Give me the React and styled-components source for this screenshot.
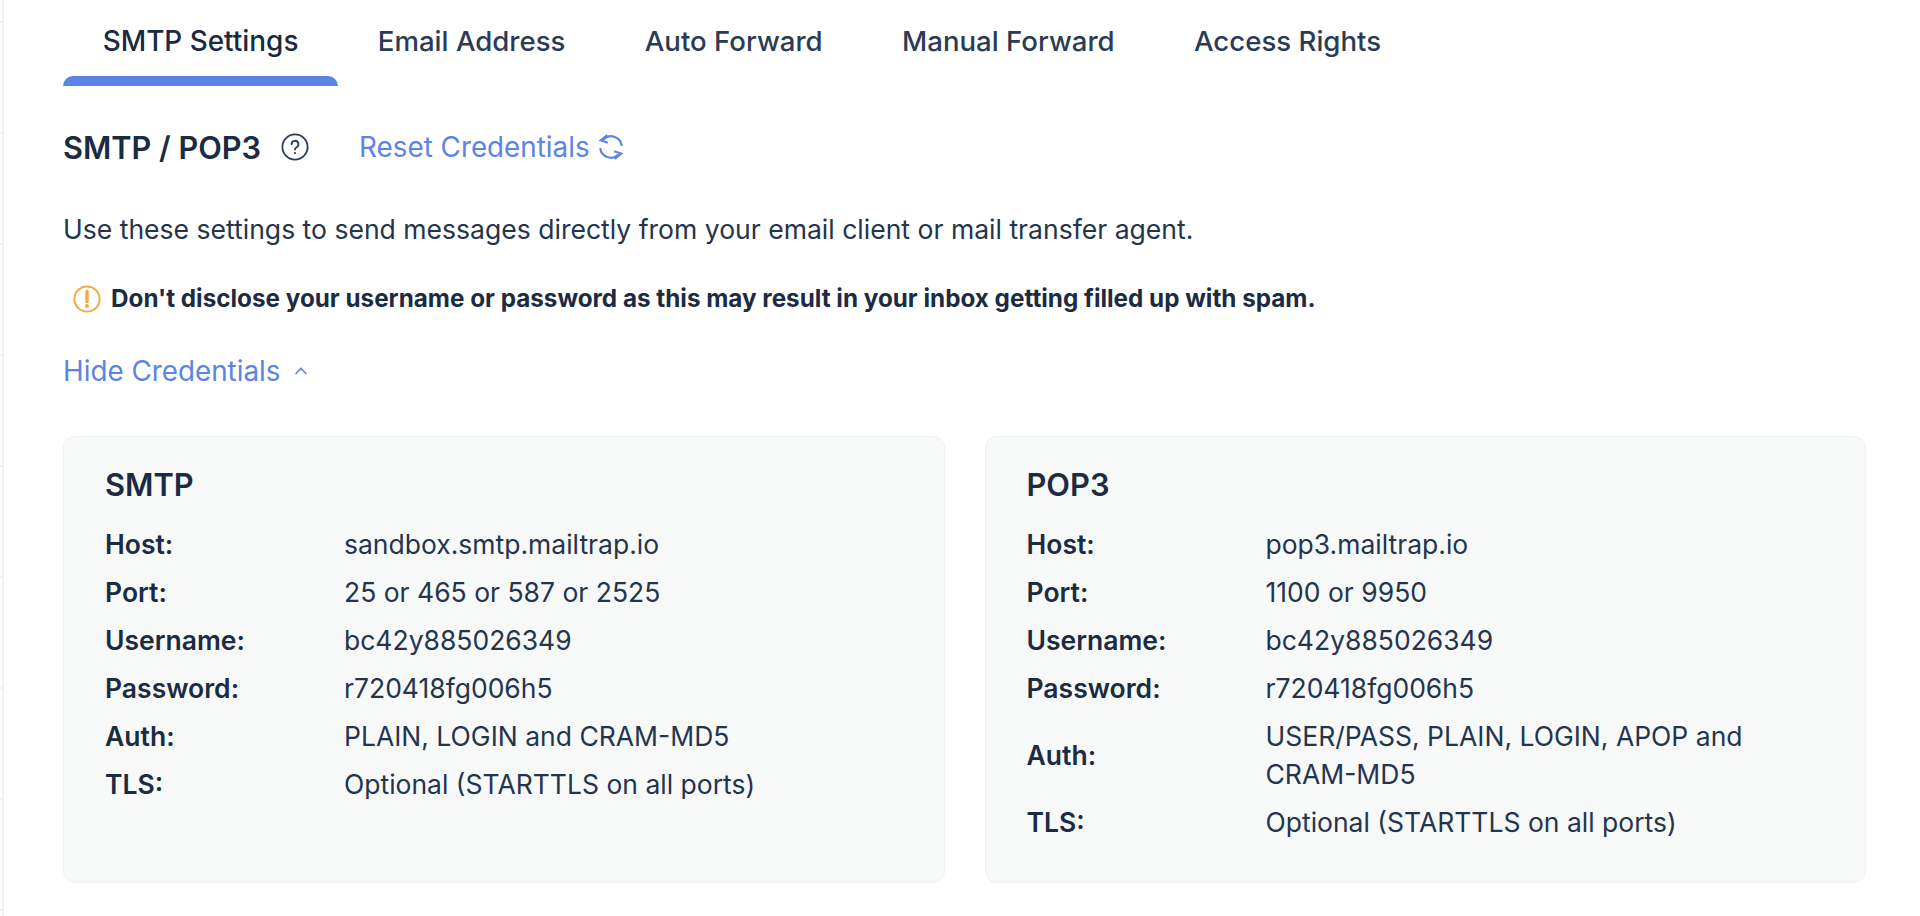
import React from "react";
import styled, { createGlobalStyle } from "styled-components";

const Global = createGlobalStyle`
  html, body { margin: 0; padding: 0; background: #fff; }
  body { font-family: Inter, "Liberation Sans", sans-serif; color: #1f2f47; }
  * { box-sizing: border-box; }
`;

const Page = styled.div`
  width: 1920px;
  height: 916px;
  overflow: hidden;
  display: flex;
`;

const SidebarEdge = styled.div`
  flex: none;
  width: 4px;
  height: 100%;
  border-right: 2px solid #f1f2f3;
  background: repeating-linear-gradient(
    to bottom,
    transparent 0,
    transparent 21px,
    #f1f2f3 21px,
    #f1f2f3 23px,
    transparent 23px,
    transparent 111px
  );
  background-size: 100% 111px;
`;

const Content = styled.main`
  flex: 1;
  min-width: 0;
  padding: 0 54px 0 59px;
`;

const Tabs = styled.nav`
  display: flex;
  height: 86px;
`;

const Tab = styled.div`
  position: relative;
  padding: 0 39.7px 4px;
  height: 86px;
  display: flex;
  align-items: center;
  font-size: ${(p) => (p.$active ? "27.9px" : "27.6px")};
  font-weight: 500;
  white-space: nowrap;
  color: ${(p) => (p.$active ? "#1a2a42" : "#2b3b55")};
  &::after {
    content: ${(p) => (p.$active ? '""' : "none")};
    position: absolute;
    left: 0;
    right: 0;
    bottom: 0;
    height: 10px;
    background: #5b84e6;
    border-radius: 10px 10px 0 0;
  }
`;

const TitleRow = styled.div`
  display: flex;
  align-items: center;
  margin-top: 37px;
  height: 48px;
`;

const Title = styled.h2`
  margin: 0;
  font-size: 30.7px;
  font-weight: 600;
  color: #1c2b42;
`;

const Help = styled.svg`
  width: 28px;
  height: 28px;
  margin-left: 20px;
  flex: none;
`;

const ResetLink = styled.a`
  display: flex;
  align-items: center;
  gap: 7px;
  margin-left: 50px;
  font-size: 27.8px;
  color: #5b84e6;
`;

const Lead = styled.p`
  margin: 40px 0 0;
  font-size: 26.55px;
  line-height: 36px;
  color: #24344d;
`;

const Warning = styled.div`
  display: flex;
  align-items: center;
  gap: 10px;
  margin-top: 34px;
  padding-left: 10px;
  font-size: 24.25px;
  line-height: 36px;
  font-weight: 700;
  color: #1c2b42;
`;

const ToggleLink = styled.a`
  display: flex;
  align-items: center;
  gap: 14px;
  margin-top: 36px;
  font-size: 27.8px;
  line-height: 36px;
  color: #5b84e6;
`;

const Cards = styled.div`
  display: grid;
  grid-template-columns: 1fr 1fr;
  gap: 40px;
  margin-top: 47px;
`;

const Card = styled.section`
  height: 447px;
  padding: 28px 41px;
  background: #f7f9f9;
  border: 1px solid #eff1f2;
  border-radius: 12px;
`;

const CardTitle = styled.h3`
  margin: 0 0 15px;
  font-size: 30.8px;
  line-height: 40px;
  font-weight: 600;
  color: #1c2b42;
`;

const Row = styled.div`
  display: grid;
  grid-template-columns: 239px 1fr;
  align-items: center;
  padding: 5px 0;
  font-size: 26.5px;
  line-height: 38px;
  color: #24344d;
`;

const Label = styled.span`
  font-weight: 600;
  color: #1c2b42;
`;

const Value = styled.span``;

const smtp = [
  ["Host:", "sandbox.smtp.mailtrap.io"],
  ["Port:", "25 or 465 or 587 or 2525"],
  ["Username:", "bc42y885026349"],
  ["Password:", "r720418fg006h5"],
  ["Auth:", "PLAIN, LOGIN and CRAM-MD5"],
  ["TLS:", "Optional (STARTTLS on all ports)"],
];
const pop3 = [
  ["Host:", "pop3.mailtrap.io"],
  ["Port:", "1100 or 9950"],
  ["Username:", "bc42y885026349"],
  ["Password:", "r720418fg006h5"],
  ["Auth:", "USER/PASS, PLAIN, LOGIN, APOP and CRAM-MD5"],
  ["TLS:", "Optional (STARTTLS on all ports)"],
];

const CredCard = ({ title, rows }) => (
  <Card>
    <CardTitle>{title}</CardTitle>
    {rows.map(([k, v]) => (
      <Row key={k}>
        <Label>{k}</Label>
        <Value>{v}</Value>
      </Row>
    ))}
  </Card>
);

export default function App() {
  return (
    <Page>
      <Global />
      <SidebarEdge />
      <Content>
        <Tabs>
          <Tab $active>SMTP Settings</Tab>
          <Tab>Email Address</Tab>
          <Tab>Auto Forward</Tab>
          <Tab>Manual Forward</Tab>
          <Tab>Access Rights</Tab>
        </Tabs>
        <TitleRow>
          <Title>SMTP / POP3</Title>
          <Help viewBox="0 0 28 28" fill="none">
            <circle cx="14" cy="14" r="12.6" stroke="#2b3b55" strokeWidth="1.8" />
            <path d="M10.6 11.2a3.4 3.4 0 1 1 5 3c-1 .6-1.6 1.2-1.6 2.4" stroke="#2b3b55" strokeWidth="1.8" strokeLinecap="round" />
            <circle cx="14" cy="20" r="1.1" fill="#2b3b55" />
          </Help>
          <ResetLink>
            Reset Credentials
            <svg width="28" height="28" viewBox="0 0 26 26" fill="none" stroke="#5b84e6" strokeWidth="2">
              <path d="M23 12a10 10 0 0 0-17-6" />
              <path d="M9.500 2 3.500 6.800l6.500 2.200" />
              <path d="M3 14a10 10 0 0 0 17 6" />
              <path d="M16.500 24l6-4.800-6.500-2.200" />
            </svg>
          </ResetLink>
        </TitleRow>
        <Lead>Use these settings to send messages directly from your email client or mail transfer agent.</Lead>
        <Warning>
          <svg width="28" height="28" viewBox="0 0 28 28" fill="none">
            <circle cx="14" cy="14" r="12.6" stroke="#f5a742" strokeWidth="2" />
            <path d="M14 6.500v10" stroke="#f5a742" strokeWidth="3.400" strokeLinecap="round" />
            <circle cx="14" cy="21" r="2" fill="#f5a742" />
          </svg>
          Don't disclose your username or password as this may result in your inbox getting filled up with spam.
        </Warning>
        <ToggleLink>
          Hide Credentials
          <svg width="14" height="10" viewBox="0 0 14 10" fill="none">
            <path d="M2 7.500 7 2.500l5 5" stroke="#5b84e6" strokeWidth="1.6" strokeLinecap="round" />
          </svg>
        </ToggleLink>
        <Cards>
          <CredCard title="SMTP" rows={smtp} />
          <CredCard title="POP3" rows={pop3} />
        </Cards>
      </Content>
    </Page>
  );
}
